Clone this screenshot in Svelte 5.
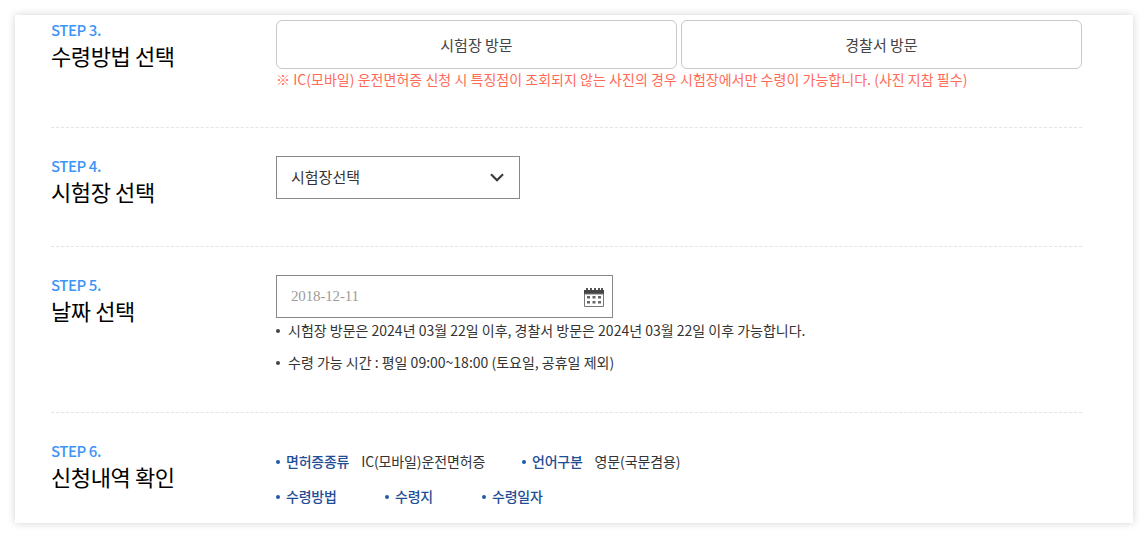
<script>
  const noteRows = [
    [{ label: '면허증종류', value: 'IC(모바일)운전면허증', cls: 'w1' }, { label: '언어구분', value: '영문(국문겸용)' }],
    [{ label: '수령방법', value: '', cls: 'w2' }, { label: '수령지', value: '', cls: 'w3' }, { label: '수령일자', value: '' }]
  ];
</script>

<div class="page">
  <div class="card">
    <section class="row r3">
      <div class="head">
        <p class="step">STEP 3.</p>
        <h3>수령방법 선택</h3>
      </div>
      <div class="body">
        <div class="btns">
          <button>시험장 방문</button>
          <button>경찰서 방문</button>
        </div>
        <p class="warn">※ IC(모바일) 운전면허증 신청 시 특징점이 조회되지 않는 사진의 경우 시험장에서만 수령이 가능합니다. (사진 지참 필수)</p>
      </div>
    </section>

    <section class="row r4">
      <div class="head">
        <p class="step">STEP 4.</p>
        <h3>시험장 선택</h3>
      </div>
      <div class="body">
        <div class="select">
          <span>시험장선택</span>
          <svg width="14" height="9" viewBox="0 0 14 9"><path d="M1 1.200 7 7.200l6-6" fill="none" stroke="#3a3a3a" stroke-width="2.200"/></svg>
        </div>
      </div>
    </section>

    <section class="row r5">
      <div class="head">
        <p class="step">STEP 5.</p>
        <h3>날짜 선택</h3>
      </div>
      <div class="body">
        <div class="date">
          <span>2018-12-11</span>
          <svg width="20" height="19" viewBox="0 0 20 19">
            <path d="M2 0h2v3H2zM6 0h2v3H6zM10 0h2v3h-2zM14 0h2v3h-2zM17 0h2v3h-2z" fill="#555"/>
            <path d="M0 2h20v4H0z" fill="#444"/>
            <path d="M.5 6h19v12.500H.5z" fill="#fff" stroke="#777"/>
            <path d="M3 8h3v2.500H3zM8.500 8h3v2.500h-3zM14 8h3v2.500h-3zM3 13h3v2.500H3zM8.500 13h3v2.500h-3zM14 13h3v2.500h-3z" fill="#666"/>
          </svg>
        </div>
        <ul class="notes">
          <li>시험장 방문은 2024년 03월 22일 이후, 경찰서 방문은 2024년 03월 22일 이후 가능합니다.</li>
          <li>수령 가능 시간 : 평일 09:00~18:00 (토요일, 공휴일 제외)</li>
        </ul>
      </div>
    </section>

    <section class="row r6">
      <div class="head">
        <p class="step">STEP 6.</p>
        <h3>신청내역 확인</h3>
      </div>
      <div class="body summary">
        {#each noteRows as items}
          <div class="sumrow">
            {#each items as it}
              <div class="item {it.cls ?? ''}">
                <b>{it.label}</b>
                {#if it.value}<span>{it.value}</span>{/if}
              </div>
            {/each}
          </div>
        {/each}
      </div>
    </section>
  </div>
</div>

<style>
  :global(body) {
    margin: 0;
    background: #fff;
    font-family: "Noto Sans CJK KR", "Noto Sans", sans-serif;
  }
  .page {
    height: 538px;
    padding: 15px 15px 15px;
    box-sizing: border-box;
    overflow: hidden;
  }
  .card {
    height: 508px;
    box-sizing: border-box;
    padding: 0 51px 0 36px;
    background: #fff;
    box-shadow: 0 0 8px rgba(0, 0, 0, 0.18);
    overflow: hidden;
  }
  .row {
    display: flex;
    box-sizing: border-box;
    border-bottom: 1px dashed #e4e4e4;
  }
  .row:last-child { border-bottom: 0; }
  .r3 { height: 113px; padding-top: 5px; }
  .r4 { height: 119px; padding-top: 28px; }
  .r5 { height: 166px; padding-top: 28px; }
  .r6 { padding-top: 28px; }
  .head { width: 225px; flex: none; }
  .step {
    margin: 0;
    color: #3d94f6;
    font-size: 15px;
    line-height: 20px;
    font-weight: 500;
    letter-spacing: -0.45px;
  }
  h3 {
    margin: 0;
    font-size: 22px;
    line-height: 30px;
    font-weight: 400;
    color: #000;
    letter-spacing: -0.4px;
  }
  .body { flex: 1; min-width: 0; }
  .btns { display: flex; gap: 4px; }
  button {
    flex: 1;
    height: 49px;
    padding: 0;
    background: #fff;
    border: 1px solid #c8c8c8;
    border-radius: 6px;
    font: inherit;
    font-size: 15px;
    color: #444;
  }
  .warn {
    margin: -1px 0 0;
    font-size: 14px;
    line-height: 22px;
    color: #ff6b57;
    white-space: nowrap;
    letter-spacing: 0.03px;
  }
  .select {
    width: 244px;
    height: 43px;
    box-sizing: border-box;
    border: 1px solid #888;
    display: flex;
    align-items: center;
    justify-content: space-between;
    padding: 0 15px 0 14px;
    font-size: 15px;
    color: #333;
  }
  .select span { margin-top: -2px; }
  .date {
    width: 337px;
    height: 43px;
    box-sizing: border-box;
    border: 1px solid #888;
    display: flex;
    align-items: center;
    justify-content: space-between;
    padding: 0 8px 0 14px;
    font-family: "Liberation Serif", serif;
    font-size: 15px;
    letter-spacing: -0.15px;
    color: #a09a98;
  }
  .date svg { margin-top: 2px; }
  .notes {
    list-style: none;
    margin: 0;
    padding: 0;
  }
  .notes li {
    position: relative;
    padding-left: 12px;
    font-size: 14px;
    line-height: 24px;
    margin-bottom: 8px;
    color: #333;
    white-space: nowrap;
  }
  .notes li::before {
    content: "";
    position: absolute;
    left: 0;
    top: 11px;
    width: 4px;
    height: 4px;
    border-radius: 50%;
    background: #444;
  }
  .summary { padding-top: 2px; }
  .sumrow { display: flex; height: 35px; align-items: center; }
  .item {
    position: relative;
    padding-left: 10px;
    font-size: 14px;
    letter-spacing: -0.25px;
    white-space: nowrap;
    display: flex;
    box-sizing: border-box;
  }
  .item::before {
    content: "";
    position: absolute;
    left: 0;
    top: 9px;
    width: 4px;
    height: 4px;
    border-radius: 50%;
    background: #1f5aa8;
  }
  .item b { font-weight: 500; color: #1f4e96; margin-right: 12px; }
  .item span { color: #333; letter-spacing: -0.13px; }
  .w1 { width: 246px; }
  .w2 { width: 109px; }
  .w3 { width: 97px; }
</style>
